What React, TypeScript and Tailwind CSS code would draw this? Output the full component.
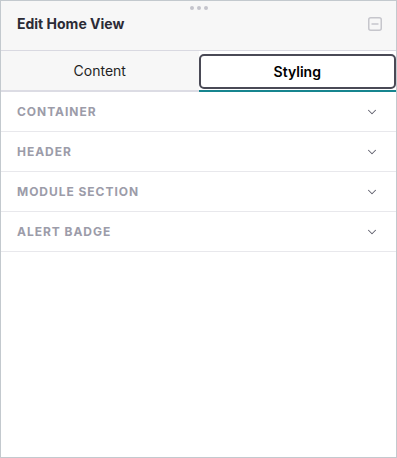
import { ChevronDown } from 'lucide-react';

const sections = ['Container', 'Header', 'Module Section', 'Alert Badge'];

function MinimizeIcon() {
  return (
    <svg width="14" height="14" viewBox="0 0 14 14" fill="none" aria-hidden="true">
      <rect x="0.75" y="0.75" width="12.5" height="12.5" rx="2" stroke="#c6c6cc" strokeWidth="1.5" />
      <line x1="3.5" y1="7" x2="10.5" y2="7" stroke="#c6c6cc" strokeWidth="1.5" />
    </svg>
  );
}

export default function App() {
  return (
    <div
      className="w-[397px] h-[458px] border border-[#c3c9ce] bg-white flex flex-col overflow-hidden"
      style={{ fontFamily: 'Inter, "Noto Sans", sans-serif' }}
    >
      {/* Header */}
      <div className="relative h-[50px] shrink-0 bg-[#f7f7f7] border-b border-[#d9d9e1] flex items-center justify-between pl-4 pr-[14px] pb-[4px]">
        <div className="absolute top-[5px] left-1/2 -translate-x-1/2 flex gap-[3px]">
          <span className="w-[4px] h-[4px] rounded-full bg-[#c4c4cc]" />
          <span className="w-[4px] h-[4px] rounded-full bg-[#c4c4cc]" />
          <span className="w-[4px] h-[4px] rounded-full bg-[#c4c4cc]" />
        </div>
        <h2 className="text-[14px] font-bold text-[#2b2b36]">Edit Home View</h2>
        <button aria-label="Minimize">
          <MinimizeIcon />
        </button>
      </div>

      {/* Tabs */}
      <div className="h-[41px] shrink-0 flex">
        <button className="flex-1 bg-[#f7f7f7] border-b-2 border-[#dcdce4] text-[14px] text-[#1f1f24]">
          Content
        </button>
        <div className="flex-1 bg-white border-b-2 border-[#16858f] pt-[3px] pb-[1px]">
          <button className="w-full h-full rounded-[5px] border-2 border-[#4a4a56] text-[14px] font-semibold text-black">
            Styling
          </button>
        </div>
      </div>

      {/* Sections */}
      <div className="flex flex-col">
        {sections.map((s) => (
          <div
            key={s}
            className="h-10 border-b border-[#e8e8ec] flex items-center justify-between pl-4 pr-[17px]"
          >
            <span className="text-[12px] font-bold uppercase tracking-[0.08em] text-[#9c9ca9]">{s}</span>
            <ChevronDown size={14} strokeWidth={1.75} className="text-[#5f5f6c]" aria-hidden="true" />
          </div>
        ))}
      </div>
    </div>
  );
}
